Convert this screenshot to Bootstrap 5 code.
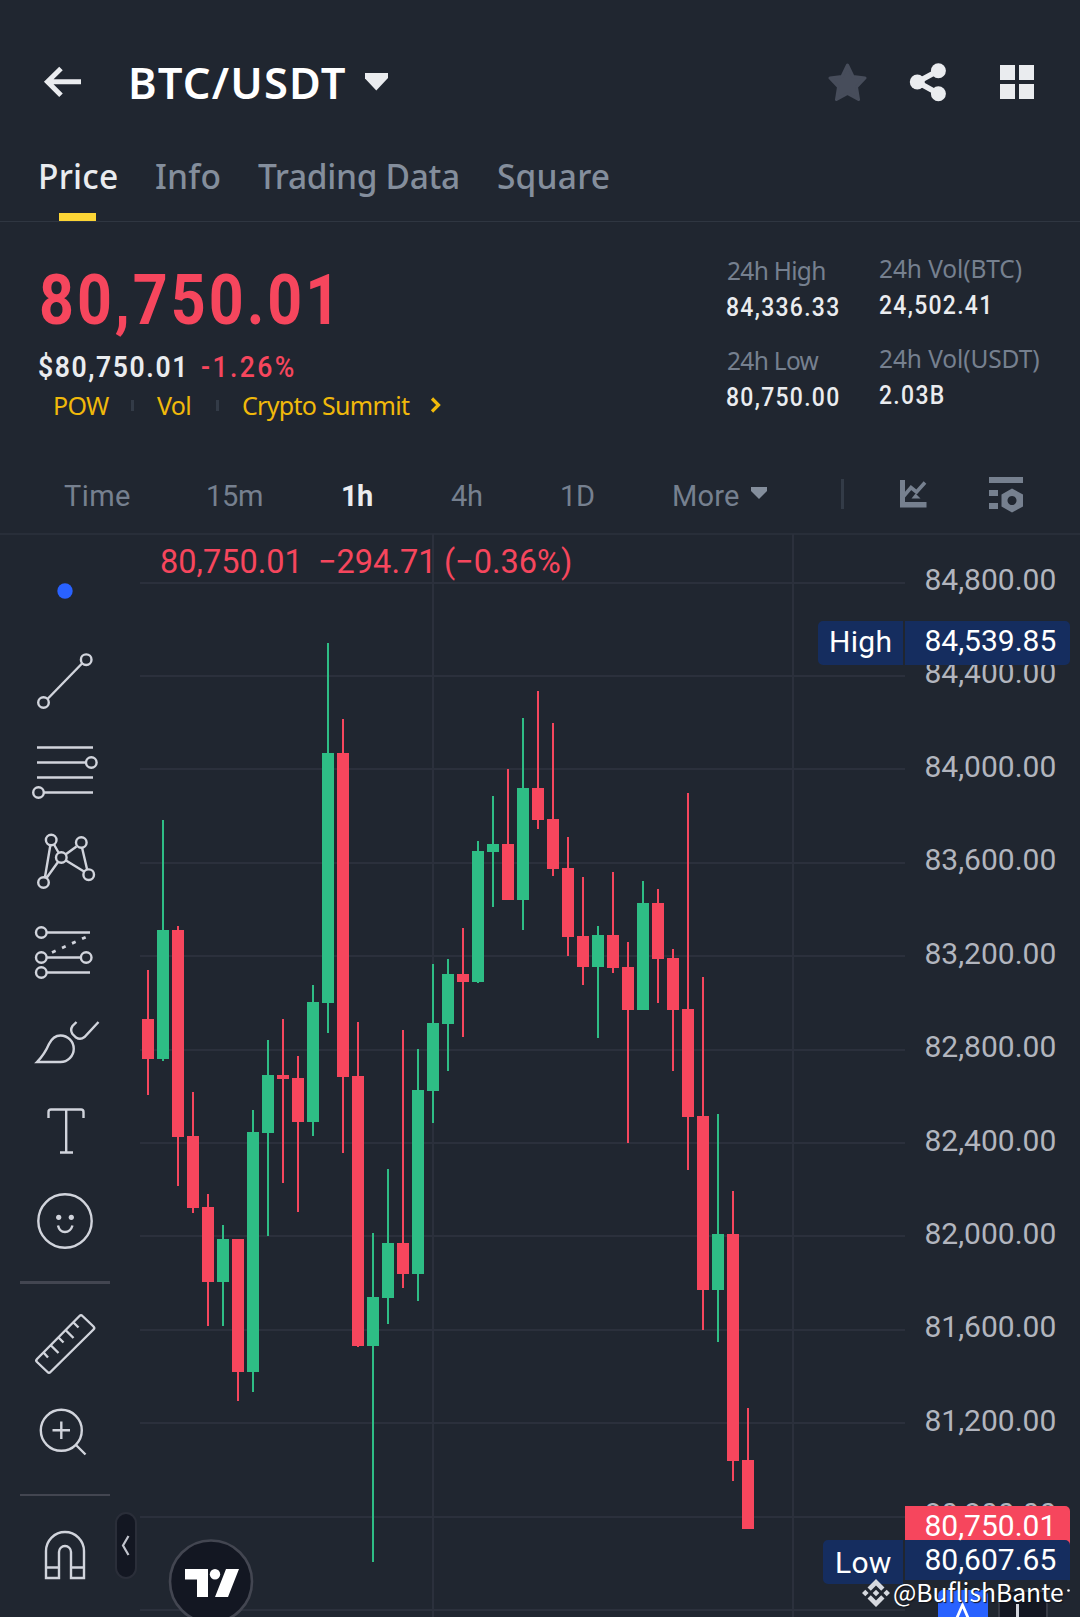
<!DOCTYPE html>
<html lang="en">
<head>
<meta charset="utf-8">
<meta name="viewport" content="width=device-width, initial-scale=1">
<title>BTC/USDT</title>
<link href="https://cdn.jsdelivr.net/npm/bootstrap@5.3.0/dist/css/bootstrap.min.css" rel="stylesheet">
<style>
:root{--bg:#202630;--ink:#eaecef;--muted:#848e9c;--dim:#76808f;--red:#f6465d;--green:#2ebd85;--gold:#f0b90b}
body{background:var(--bg);color:var(--ink);font-family:"Noto Sans","Open Sans",sans-serif;height:1617px;overflow:hidden;white-space:nowrap}
svg{display:block}
.num{font-family:Roboto,"Liberation Sans",sans-serif}
.topbar{height:116px;padding:47px 0 0 41px}
.pair{font-size:43.5px;font-weight:600;line-height:66px;color:#fff;width:237px;margin-left:45px;letter-spacing:1.15px}
.top-share{margin-left:40px}
.top-grid{margin:0 45px 0 51px}
.tabs{height:106px;padding-left:38px;border-bottom:1px solid #2f3641}
.tabs a{font-size:33.5px;font-weight:500;line-height:46px;padding-top:37px;color:var(--muted);text-decoration:none;letter-spacing:.2px}
.tabs a:nth-child(1){width:117px}
.tabs a:nth-child(2){width:103px}
.tabs a:nth-child(3){width:239px;letter-spacing:-.33px}
.tabs a.active{color:var(--ink)}
.tabs a.active::after{content:"";display:block;width:37px;height:8px;background:#fcd535;margin:14px 0 0 21px}
.ticker{height:244px;padding-left:38px}
.col-price{width:688px}
.col-range{width:153px;padding-top:31px}
.col-vol{padding-top:29px}
.din{display:inline-block;transform:scaleX(.9);transform-origin:0 50%}
.last{font-size:70px;font-weight:700;line-height:82px;color:var(--red);margin-top:37px}
.last .din{transform:scaleX(.87);letter-spacing:3.44px;margin-left:1px}
.fiat{font-size:29.5px;font-weight:600;line-height:34px;margin-top:9px}
.fiat .din{letter-spacing:1.75px}
.fiat-usd{width:163px}
.fiat .change{color:var(--red);font-weight:500;letter-spacing:2.7px}
.tags{font-size:25px;line-height:36px;color:var(--gold);padding-left:15px;margin-top:3px;letter-spacing:-.69px}
.tags i{width:3px;height:11px;background:#333b47}
.tag-a{width:78px}
.tag-b{width:59px;margin-left:23px}
.tag-c{width:188px;margin-left:23px}
.stat{font-size:24.5px;line-height:35px;height:90px}
.stat .k{color:var(--dim);letter-spacing:-.1px}
.col-range .k{letter-spacing:-.7px;padding-left:1px}
.stat .num{font-size:25.5px;line-height:38px}
.stat .din{letter-spacing:1.45px;font-weight:500}
.frames{height:67px;padding:10px 0 0 64px;font-size:29px;line-height:40px;color:var(--dim);letter-spacing:.2px}
.frames .w1{width:142px;letter-spacing:.4px}.frames .w2{width:135px;letter-spacing:-.3px}.frames .w3{width:110px;color:var(--ink);font-weight:700;letter-spacing:-.64px}.frames .w4{width:109px;letter-spacing:-.3px}.frames .w5{width:112px;letter-spacing:-.3px}.frames .w6{width:78px}
.split{margin-left:73px}.ico-ind{margin-left:53px}.ico-set{margin-left:57px}
.stage{height:1084px}
.tools{width:140px}
.tools hr{width:90px;height:3px;margin:15px 0 15px 20px;border:0;opacity:1;background:#434651}
.tools hr.thin{height:2px}
.pill{left:115px;top:979px}
.mark-text{font-family:"Noto Sans CJK SC","Noto Sans",sans-serif}
</style>
</head>
<body>
<header>
  <div class="topbar d-flex align-items-center">
    <svg width="42" height="40" viewBox="41 62 42 40" fill="none" stroke="#eaecef" stroke-width="5"><path d="M81 81.700H48M61 68.500 47.500 81.700 61 95.200"/></svg>
    <div class="pair">BTC/USDT</div>
    <svg width="26" height="20" viewBox="365 71 26 20"><path fill="#eaecef" d="M364.500 72h23.500v5L376.300 89.500l-11.800-12.500z"/></svg>
    <svg class="ms-auto" width="40" height="42" viewBox="828 61 40 42"><path fill="#474d5b" stroke="#474d5b" stroke-width="3" stroke-linejoin="round" d="m847.500 65 5.500 11.500 12 1.500-8.500 9 2 12.500-11-6-11 6 2-12.500-8.500-9 12-1.500z"/></svg>
    <svg class="top-share" width="40" height="42" viewBox="908 60 40 42" fill="#eaecef"><path d="M938.400 69.700 917.300 81l21.100 11.700" fill="none" stroke="#eaecef" stroke-width="5.500"/><circle cx="938.400" cy="69.700" r="7.500"/><circle cx="917.300" cy="81" r="7.500"/><circle cx="938.400" cy="92.700" r="7.500"/></svg>
    <svg class="top-grid" width="36" height="36" viewBox="999 63 36 36" fill="#eaecef"><path d="M1000 64h15v15h-15zM1019 64h15v15h-15zM1000 83h15v15h-15zM1019 83h15v15h-15z"/></svg>
  </div>
  <nav class="tabs d-flex">
    <a class="active" href="#">Price</a>
    <a href="#">Info</a>
    <a href="#">Trading Data</a>
    <a href="#">Square</a>
  </nav>
</header>
<section class="ticker d-flex">
  <div class="col-price">
    <div class="last num"><span class="din">80,750.01</span></div>
    <div class="fiat num d-flex"><div class="fiat-usd"><span class="din">$80,750.01</span></div><span class="din change">-1.26%</span></div>
    <div class="tags d-flex align-items-center"><span class="tag-a">POW</span><i></i><span class="tag-b">Vol</span><i></i><span class="tag-c">Crypto Summit</span>
      <svg width="12" height="18" viewBox="431 397 12 18" fill="none" stroke="#f0b90b" stroke-width="3.200"><path d="m433 399.500 6.500 6.500-6.500 6.500"/></svg></div>
  </div>
  <div class="col-range">
    <div class="stat"><div class="k">24h High</div><div class="num"><span class="din">84,336.33</span></div></div>
    <div class="stat"><div class="k">24h Low</div><div class="num"><span class="din">80,750.00</span></div></div>
  </div>
  <div class="col-vol">
    <div class="stat"><div class="k">24h Vol(BTC)</div><div class="num"><span class="din">24,502.41</span></div></div>
    <div class="stat"><div class="k">24h Vol(USDT)</div><div class="num"><span class="din">2.03B</span></div></div>
  </div>
</section>
<nav class="frames num d-flex">
  <span class="w1">Time</span><span class="w2">15m</span><span class="w3">1h</span><span class="w4">4h</span><span class="w5">1D</span><span class="w6">More</span>
  <svg width="18" height="40" viewBox="750 476 18 40"><path fill="#848e9c" d="M751 487h16v4l-8 8-8-8z"/></svg>
  <svg class="split" width="4" height="40" viewBox="842 476 4 40"><path fill="#333b47" d="M842 479h3v30h-3z"/></svg>
  <svg class="ico-ind" width="32" height="40" viewBox="900 476 32 40" fill="#76808f"><path d="M902 480h5v22h21.500v5.500H902z"/><path d="m905 497 8-9.500 5.500 4.500 8.500-9.500" fill="none" stroke="#76808f" stroke-width="3.600"/><path d="m917.500 493.500 5 5h-9z"/></svg>
  <svg class="ico-set" width="38" height="40" viewBox="989 476 38 40" fill="#76808f"><path d="M991 477h34v6h-34zM991 490h9v6h-9zM991 503h9v6h-9z"/><path fill-rule="evenodd" d="M1014 488.500 1025 494.500v12l-11 6-10.500-6v-12zM1014 496a4.500 4.500 0 1 0 .01 0z"/></svg>
</nav>
<main class="stage d-flex position-relative">
  <aside class="tools flex-shrink-0">
    <svg width="140" height="103" viewBox="0 533 140 103"><path fill="#282e39" d="M0 532h140v3H0z"/><circle cx="65" cy="591" r="7.700" fill="#2962ff"/></svg>
    <svg width="140" height="630" viewBox="0 636 140 630" fill="none" stroke="#d1d4dc" stroke-width="2.400">
      <path d="m47.500 699 35-36"/><circle cx="86.200" cy="659.700" r="5.300"/><circle cx="43.500" cy="702.500" r="5.300"/>
      <path d="M37 747.500h56M37 762.500h49M37 777.500h56M44 792.500h49"/><circle cx="91.300" cy="762.500" r="5.300"/><circle cx="38.500" cy="792.500" r="5.300"/>
      <path d="m54 844.500 4.500 8M65.500 854.500l11-8M82 847.500l5 21.500M66 860.500l18 11M58 862 46.500 878M50.300 845.500 45 877"/><circle cx="51.200" cy="840" r="5.300"/><circle cx="81.300" cy="842.500" r="5.300"/><circle cx="61.300" cy="857.500" r="5.300"/><circle cx="43.500" cy="882.500" r="5.300"/><circle cx="88.700" cy="874.700" r="5.300"/>
      <path d="M46.500 932.500H90M46.500 957.500H81M46.500 972.500H90"/><path d="m52 952.500 34-15.500" stroke-width="2.800" stroke-dasharray="4 7"/><circle cx="41.300" cy="932.500" r="5.300"/><circle cx="41.300" cy="957.500" r="5.300"/><circle cx="86.200" cy="957.500" r="5.300"/><circle cx="41.300" cy="972.500" r="5.300"/>
      <path d="M37 1062c7-7 9-11 12-18 3-6 7-8.500 11.500-8.500a13.200 13.200 0 0 1 0 26.500zM76.500 1022l-4 4c-2 3-2 5 0 8l3.500 3.500c3 2 6 1.500 8.500-.5l14-15"/>
      <path d="M48.500 1118v-6q0-2.500 2.500-2.500h30q2.500 0 2.500 2.500v6M66.200 1109.500v42.500M60 1152.500h13"/>
      <circle cx="65" cy="1221" r="26.700"/><path d="M58 1225.500q1.500 6.500 7 6.500t7.500-6.500"/><g fill="#d1d4dc" stroke="none"><circle cx="58.700" cy="1217.300" r="2.600"/><circle cx="71.300" cy="1217.300" r="2.600"/></g>
    </svg>
    <hr>
    <svg width="140" height="180" viewBox="0 1299 140 180" fill="none" stroke="#d1d4dc" stroke-width="2.400">
      <path stroke-linejoin="round" d="M79.500 1316q1.500-1.500 3 0l11 10.500q1.500 1.500 0 3L50.500 1372q-1.500 1.500-3 0l-10.500-10q-1.500-1.500 0-3zM44 1353l4 4.500M51 1345.500l7.500 7.500M59 1338l4.500 4.500M66 1330.500l7.500 7.500M74 1323l4.500 4.500"/>
      <circle cx="61.300" cy="1430.300" r="20.500"/><path d="M52.500 1430.300h17.500M61.300 1421.500v17.500M76 1445l9.500 9.500"/>
    </svg>
    <hr class="thin">
    <svg width="140" height="106" viewBox="0 1511 140 106" fill="none" stroke="#d1d4dc" stroke-width="2.400"><path d="M46 1578v-27a19 19 0 0 1 38 0v27H71v-26a6 6 0 0 0-12 0v26zM46 1567.500h13M71 1567.500h13"/></svg>
  </aside>
  <svg class="num flex-shrink-0" width="940" height="1084" viewBox="140 533 940 1084">
    <path fill="#282e39" d="M140 532h940v3H140z"/>
    <g fill="#2b303c">
      <path d="M140 582h765v2H140zM140 675h765v2H140zM140 768h765v2H140zM140 862h765v2H140zM140 955h765v2H140zM140 1049h765v2H140zM140 1142h765v2H140zM140 1235h765v2H140zM140 1329h765v2H140zM140 1422h765v2H140zM140 1516h765v2H140zM140 1609h765v2H140z"/>
      <path d="M432 534h2v1083h-2zM792 534h2v1083h-2z"/>
    </g>
    <g id="candles"></g>
    <g font-size="32.500" fill="#f6465d"><text x="160" y="573">80,750.01</text><text x="318" y="573">−294.71</text><text x="444" y="573">(−0.36%)</text></g>
    <g font-size="30" fill="#b2b5be">
      <text x="924.500" y="590">84,800.00</text><text x="924.500" y="683">84,400.00</text><text x="924.500" y="777">84,000.00</text><text x="924.500" y="870">83,600.00</text><text x="924.500" y="964">83,200.00</text><text x="924.500" y="1057">82,800.00</text><text x="924.500" y="1151">82,400.00</text><text x="924.500" y="1244">82,000.00</text><text x="924.500" y="1337">81,600.00</text><text x="924.500" y="1431">81,200.00</text><text x="924.500" y="1524">80,800.00</text>
    </g>
    <g fill="#152d5f"><path d="M903 621v44h-80a5 5 0 0 1-5-5v-34a5 5 0 0 1 5-5zM905 621h160a5 5 0 0 1 5 5v34a5 5 0 0 1-5 5H905z"/></g>
    <path fill="#f6465d" d="M905 1506h160a5 5 0 0 1 5 5v34H905z"/>
    <path fill="#152d5f" d="M903 1540v44h-75a5 5 0 0 1-5-5v-34a5 5 0 0 1 5-5zM905 1540h160a5 5 0 0 1 5 5v35H905z"/>
    <g font-size="30" fill="#fff"><text x="829" y="652" letter-spacing=".3">High</text><text x="924.500" y="651">84,539.85</text><text x="924.500" y="1536">80,750.01</text><text x="835" y="1573" letter-spacing=".3">Low</text><text x="924.500" y="1570">80,607.65</text></g>
    <circle cx="211" cy="1581.500" r="41" fill="#131722" stroke="#434651" stroke-width="2.600"/>
    <path fill="#fff" d="M185 1569h23v28h-11v-17.500h-12zM226 1569h13l-11 28h-13z"/><circle cx="215" cy="1574.300" r="5.200" fill="#fff"/>
    <path fill="#2962ff" d="M938 1617v-22a5 5 0 0 1 5-5h40a5 5 0 0 1 5 5v22z"/>
    <path fill="#131722" stroke="#363a45" stroke-width="2" d="M999 1620v-25q0-4 4-4h40q4 0 4 4v25z"/>
    <path fill="none" stroke="#fff" stroke-width="2.800" d="m956 1620 6.500-15 6.500 15"/><path fill="#d1d4dc" d="M1016 1604h3v13h-3z"/>
    <g fill="#d6d9df"><path d="m876 1579 8.500 8.500-3.300 3.300-5.200-5.200-5.200 5.200-3.300-3.300zM876 1607l8.500-8.500-3.300-3.300-5.200 5.200-5.200-5.200-3.300 3.300zM876 1589.700l3.300 3.300-3.300 3.300-3.300-3.300zM865.300 1589.700l3.300 3.300-3.300 3.300-3.300-3.300zM886.700 1589.700l3.300 3.300-3.300 3.300-3.300-3.300z"/></g>
    <text class="mark-text" font-size="24.700" x="893" y="1602" fill="#fff" style="text-shadow:1px 1px 1px #10131a">@BuflishBante</text>
    <circle cx="1068.500" cy="1590.500" r="1.300" fill="#fff"/>
  </svg>
  <svg class="pill position-absolute" width="22" height="68" viewBox="0 0 22 68"><rect x="1" y="1" width="20" height="65" rx="10" fill="#131722" stroke="#2a2e39" stroke-width="2"/><path d="m13.500 24-5.500 9.500 5.500 9.500" fill="none" stroke="#c1c4cd" stroke-width="2.200"/></svg>
</main>
<script src="https://cdn.jsdelivr.net/npm/bootstrap@5.3.0/dist/js/bootstrap.bundle.min.js"></script>
<script>
// One hourly candle per row: direction, wick top, body top, body bottom, wick bottom
const candles = [
['r',970,1019,1059,1095],['g',820,930,1059,1061],['r',926,930,1137,1186],['r',1092,1136,1208,1213],['r',1194,1207,1282,1326],
['g',1225,1239,1282,1326],['r',1239,1239,1372,1401],['g',1110,1132,1372,1392],['g',1040,1075,1133,1236],['r',1019,1075,1079,1183],
['r',1056,1078,1122,1212],['g',985,1002,1122,1136],['g',643,753,1003,1033],['r',719,753,1077,1153],['r',1022,1076,1346,1347],
['g',1233,1297,1346,1562],['g',1169,1243,1298,1324],['r',1030,1243,1274,1288],['g',1049,1090,1274,1301],['g',964,1023,1091,1123],
['g',959,974,1024,1071],['r',928,974,982,1037],['g',841,851,982,983],['g',796,844,852,907],['r',769,844,900,900],
['g',718,788,900,930],['r',691,788,820,829],['r',723,819,869,876],['r',837,868,937,956],['r',877,936,967,985],
['g',926,935,967,1038],['r',872,935,968,973],['r',942,967,1010,1143],['g',881,903,1010,1010],['r',889,903,959,1003],
['r',949,958,1010,1071],['r',793,1009,1117,1170],['r',977,1116,1290,1330],['g',1114,1234,1290,1342],['r',1191,1234,1461,1481],
['r',1408,1460,1529,1529]];
const fill = {r: '#f6465d', g: '#2ebd85'};
document.getElementById('candles').innerHTML = candles.map(([d, wt, bt, bb, wb], i) => {
  const x = 142 + 15 * i;
  return `<path fill="${fill[d]}" d="M${x} ${bt}h12V${bb}h-12zM${x + 5} ${wt}h2V${wb}h-2z"/>`;
}).join('');
</script>
</body>
</html>
